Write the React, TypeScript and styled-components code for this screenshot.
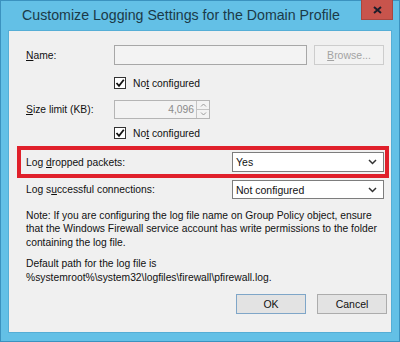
import React from "react";
import styled, { createGlobalStyle } from "styled-components";

const Global = createGlobalStyle`
  html, body { margin: 0; padding: 0; background: #ffffff; }
  * { box-sizing: border-box; }
`;

const Window = styled.div`
  width: 400px;
  height: 342px;
  background: #63c0e6;
  border: 1px solid #3b92bf;
  display: flex;
  flex-direction: column;
  padding: 0 7px 8px 7px;
  font-family: "Liberation Sans", Arial, sans-serif;
  font-size: 10.3px;
  color: #111;
`;

const TitleBar = styled.div`
  height: 29px;
  display: flex;
  align-items: flex-start;
  margin-right: -1px;
`;

const Title = styled.div`
  flex: 1;
  padding-left: 14px;
  padding-top: 6px;
  font-size: 14.2px;
  color: #1b3a48;
  white-space: nowrap;
`;

const CloseButton = styled.div`
  width: 32px;
  height: 20px;
  margin-top: -1px;
  background: #c8544c;
  border: 1px solid #a8463f;
  border-top: none;
  display: flex;
  align-items: center;
  justify-content: center;
`;

const Panel = styled.div`
  flex: 1;
  background: #f0f0f0;
  border: 1px solid #55aed6;
  padding: 14px 7px 0 17px;
  display: flex;
  flex-direction: column;
`;

const Row = styled.div<{ $mt?: number; $h?: number }>`
  display: flex;
  align-items: center;
  margin-top: ${(p) => p.$mt ?? 0}px;
  height: ${(p) => p.$h ?? 20}px;
`;

const Label = styled.div<{ $w: number }>`
  width: ${(p) => p.$w}px;
  flex: none;
  white-space: nowrap;
`;

const U = styled.span`
  text-decoration: underline;
  text-underline-offset: 1px;
`;

const TextBox = styled.div<{ $w: number }>`
  width: ${(p) => p.$w}px;
  height: 100%;
  background: #f3f3f3;
  border: 1px solid #a7a7a7;
`;

const Button = styled.div<{ $disabled?: boolean; $default?: boolean }>`
  width: 70px;
  height: 20px;
  display: flex;
  align-items: center;
  justify-content: center;
  background: ${(p) => (p.$disabled ? "#f2f2f2" : "#e3e3e3")};
  border: 1px solid
    ${(p) => (p.$disabled ? "#cdcdcd" : p.$default ? "#7fa6c8" : "#acacac")};
  color: ${(p) => (p.$disabled ? "#a3a3a3" : "#111")};
  font-size: 10.5px;
`;

const CheckRow = styled.div<{ $mt: number }>`
  display: flex;
  align-items: center;
  margin-top: ${(p) => p.$mt}px;
  height: 12px;
  padding-left: 88px;
  gap: 7px;
`;

const CheckBox = styled.div`
  width: 12px;
  height: 12px;
  background: #fff;
  border: 1px solid #333;
  display: flex;
  align-items: center;
  justify-content: center;
`;

const Spinner = styled.div`
  width: 96px;
  height: 100%;
  display: flex;
  background: #f3f3f3;
  border: 1px solid #b5b5b5;
`;

const SpinValue = styled.div`
  flex: 1;
  text-align: right;
  padding-right: 2px;
  color: #8a8a8a;
  display: flex;
  align-items: center;
  justify-content: flex-end;
`;

const SpinArrows = styled.div`
  width: 13px;
  display: flex;
  flex-direction: column;
  border-left: 1px solid #c4c4c4;
`;

const SpinHalf = styled.div<{ $top?: boolean }>`
  flex: 1;
  display: flex;
  align-items: center;
  justify-content: center;
  border-bottom: ${(p) => (p.$top ? "1px solid #c4c4c4" : "none")};
`;

const Highlight = styled.div`
  margin: 7px -5px 0 -9px;
  height: 32px;
  border: 4px solid #e0202b;
  display: flex;
  align-items: center;
  padding: 0 1px 0 5px;
`;

const Select = styled.div<{ $h: number }>`
  width: 152px;
  height: ${(p) => p.$h}px;
  background: #fff;
  border: 1px solid #7d7d7d;
  display: flex;
  align-items: center;
  padding: 0 6px 0 3px;
  justify-content: space-between;
  font-size: 10.5px;
`;

const Para = styled.div<{ $mt: number; $lh: number }>`
  margin-top: ${(p) => p.$mt}px;
  line-height: ${(p) => p.$lh}px;
  white-space: nowrap;
`;

const ButtonRow = styled.div`
  display: flex;
  justify-content: flex-end;
  gap: 11px;
  margin: 9px -3px 0 0;
`;

const Chevron = () => (
  <svg width="9" height="6" viewBox="0 0 9 6">
    <polyline points="1,1 4.5,4.5 8,1" fill="none" stroke="#333" strokeWidth="1.5" />
  </svg>
);

const Check = () => (
  <svg width="10" height="10" viewBox="0 0 10 10">
    <polyline points="1.5,5 4,7.8 8.8,1.8" fill="none" stroke="#111" strokeWidth="1.8" />
  </svg>
);

const Arrow = ({ up }: { up?: boolean }) => (
  <svg width="7" height="4" viewBox="0 0 7 4">
    <polyline
      points={up ? "1,3.5 3.5,1 6,3.5" : "1,0.5 3.5,3 6,0.5"}
      fill="none"
      stroke="#9a9a9a"
      strokeWidth="1"
    />
  </svg>
);

export default function App() {
  return (
    <>
      <Global />
      <Window>
        <TitleBar>
          <Title>Customize Logging Settings for the Domain Profile</Title>
          <CloseButton>
            <svg width="9" height="8" viewBox="0 0 9 8">
              <path d="M1 1 L8 7 M8 1 L1 7" stroke="#1d1d2a" strokeWidth="2" />
            </svg>
          </CloseButton>
        </TitleBar>
        <Panel>
          <Row $h={20}>
            <Label $w={88}>
              <U>N</U>ame:
            </Label>
            <TextBox $w={193} />
            <div style={{ width: 7 }} />
            <Button $disabled>
              <span>
                <U>B</U>rowse...
              </span>
            </Button>
          </Row>
          <CheckRow $mt={12}>
            <CheckBox>
              <Check />
            </CheckBox>
            <span>
              No<U>t</U> configured
            </span>
          </CheckRow>
          <Row $mt={11} $h={19}>
            <Label $w={88}>
              <U>S</U>ize limit (KB):
            </Label>
            <Spinner>
              <SpinValue>4,096</SpinValue>
              <SpinArrows>
                <SpinHalf $top>
                  <Arrow up />
                </SpinHalf>
                <SpinHalf>
                  <Arrow />
                </SpinHalf>
              </SpinArrows>
            </Spinner>
          </Row>
          <CheckRow $mt={8}>
            <CheckBox>
              <Check />
            </CheckBox>
            <span>
              No<U>t</U> configured
            </span>
          </CheckRow>
          <Highlight>
            <Label $w={206}>
              Log <U>d</U>ropped packets:
            </Label>
            <Select $h={20}>
              <span>Yes</span>
              <Chevron />
            </Select>
          </Highlight>
          <Row $mt={2} $h={19}>
            <Label $w={206}>
              Log s<U>u</U>ccessful connections:
            </Label>
            <Select $h={19}>
              <span>Not configured</span>
              <Chevron />
            </Select>
          </Row>
          <Para $mt={10} $lh={13.3}>
            Note: If you are configuring the log file name on Group Policy object, ensure
            <br />
            that the Windows Firewall service account has write permissions to the folder
            <br />
            containing the log file.
          </Para>
          <Para $mt={8} $lh={14}>
            Default path for the log file is
            <br />
            %systemroot%\system32\logfiles\firewall\pfirewall.log.
          </Para>
          <ButtonRow>
            <Button $default>OK</Button>
            <Button>Cancel</Button>
          </ButtonRow>
        </Panel>
      </Window>
    </>
  );
}
